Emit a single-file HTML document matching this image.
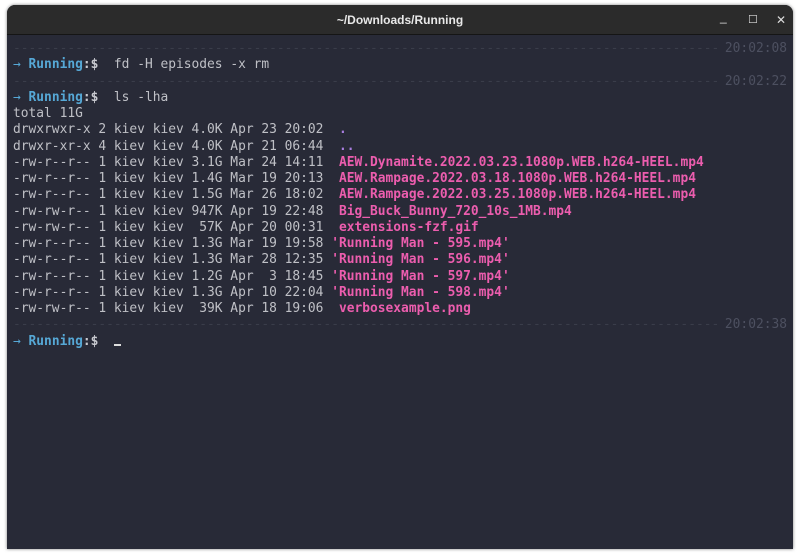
<!DOCTYPE html>
<html><head><meta charset="utf-8"><style>
html,body{margin:0;padding:0;background:#fff;width:800px;height:557px;overflow:hidden}
.win{position:absolute;left:7px;top:5px;width:786px;height:544px;border-radius:8px 8px 0 0;overflow:hidden;background:#282a37;box-shadow:0 0 3px rgba(0,0,0,.5)}
.tb{height:29px;background:#2b2b2b;border-bottom:1px solid #151515;position:relative;color:#e8e8e8;font:bold 12px "Liberation Sans",sans-serif;text-align:center;line-height:30px}
.ctl{position:absolute;top:0;color:#ddd;font-weight:normal}
.term{position:absolute;left:6px;top:36px;width:774px;font-family:"DejaVu Sans Mono","Liberation Mono",monospace;font-size:12.9px;line-height:16.25px;color:#bfc0c6}
.l{height:16.25px;white-space:pre;overflow:hidden}
.sep{display:flex;color:#3a3d4a}
.sep .d{flex:1;overflow:hidden}
.sep .t{color:#4d5060;padding-left:8px}
.ar{color:#56a8d6}.b{color:#56a8d6;font-weight:bold}.w{color:#c9cad0;font-weight:bold}
.p{color:#ec5dae;font-weight:bold}.v{color:#a97ee0;font-weight:bold}
.cur{display:inline-block;width:7px;height:2px;background:#ddd;vertical-align:-1px}
</style></head><body>
<div class="win">
<div class="tb">~/Downloads/Running<span class="ctl" style="left:713px;top:-3px">_</span><span class="ctl" style="left:741px;font-size:11px">☐</span><span class="ctl" style="left:769px;font-size:12px">✕</span></div>
<div class="term"><div class="l sep"><span class="d">----------------------------------------------------------------------------------------------------------------------</span><span class="t">20:02:08</span></div><div class="l"><span class="ar">→ </span><span class="b">Running</span><span class="w">:$</span>  fd -H episodes -x rm</div><div class="l sep"><span class="d">----------------------------------------------------------------------------------------------------------------------</span><span class="t">20:02:22</span></div><div class="l"><span class="ar">→ </span><span class="b">Running</span><span class="w">:$</span>  ls -lha</div><div class="l">total 11G</div><div class="l">drwxrwxr-x 2 kiev kiev 4.0K Apr 23 20:02  <span class="v">.</span></div><div class="l">drwxr-xr-x 4 kiev kiev 4.0K Apr 21 06:44  <span class="v">..</span></div><div class="l">-rw-r--r-- 1 kiev kiev 3.1G Mar 24 14:11  <span class="p">AEW.Dynamite.2022.03.23.1080p.WEB.h264-HEEL.mp4</span></div><div class="l">-rw-r--r-- 1 kiev kiev 1.4G Mar 19 20:13  <span class="p">AEW.Rampage.2022.03.18.1080p.WEB.h264-HEEL.mp4</span></div><div class="l">-rw-r--r-- 1 kiev kiev 1.5G Mar 26 18:02  <span class="p">AEW.Rampage.2022.03.25.1080p.WEB.h264-HEEL.mp4</span></div><div class="l">-rw-rw-r-- 1 kiev kiev 947K Apr 19 22:48  <span class="p">Big_Buck_Bunny_720_10s_1MB.mp4</span></div><div class="l">-rw-rw-r-- 1 kiev kiev  57K Apr 20 00:31  <span class="p">extensions-fzf.gif</span></div><div class="l">-rw-r--r-- 1 kiev kiev 1.3G Mar 19 19:58 <span class="p">'Running Man - 595.mp4'</span></div><div class="l">-rw-r--r-- 1 kiev kiev 1.3G Mar 28 12:35 <span class="p">'Running Man - 596.mp4'</span></div><div class="l">-rw-r--r-- 1 kiev kiev 1.2G Apr  3 18:45 <span class="p">'Running Man - 597.mp4'</span></div><div class="l">-rw-r--r-- 1 kiev kiev 1.3G Apr 10 22:04 <span class="p">'Running Man - 598.mp4'</span></div><div class="l">-rw-rw-r-- 1 kiev kiev  39K Apr 18 19:06  <span class="p">verbosexample.png</span></div><div class="l sep"><span class="d">----------------------------------------------------------------------------------------------------------------------</span><span class="t">20:02:38</span></div><div class="l"><span class="ar">→ </span><span class="b">Running</span><span class="w">:$</span>  <span class="cur"></span></div></div>
</div>
</body></html>
